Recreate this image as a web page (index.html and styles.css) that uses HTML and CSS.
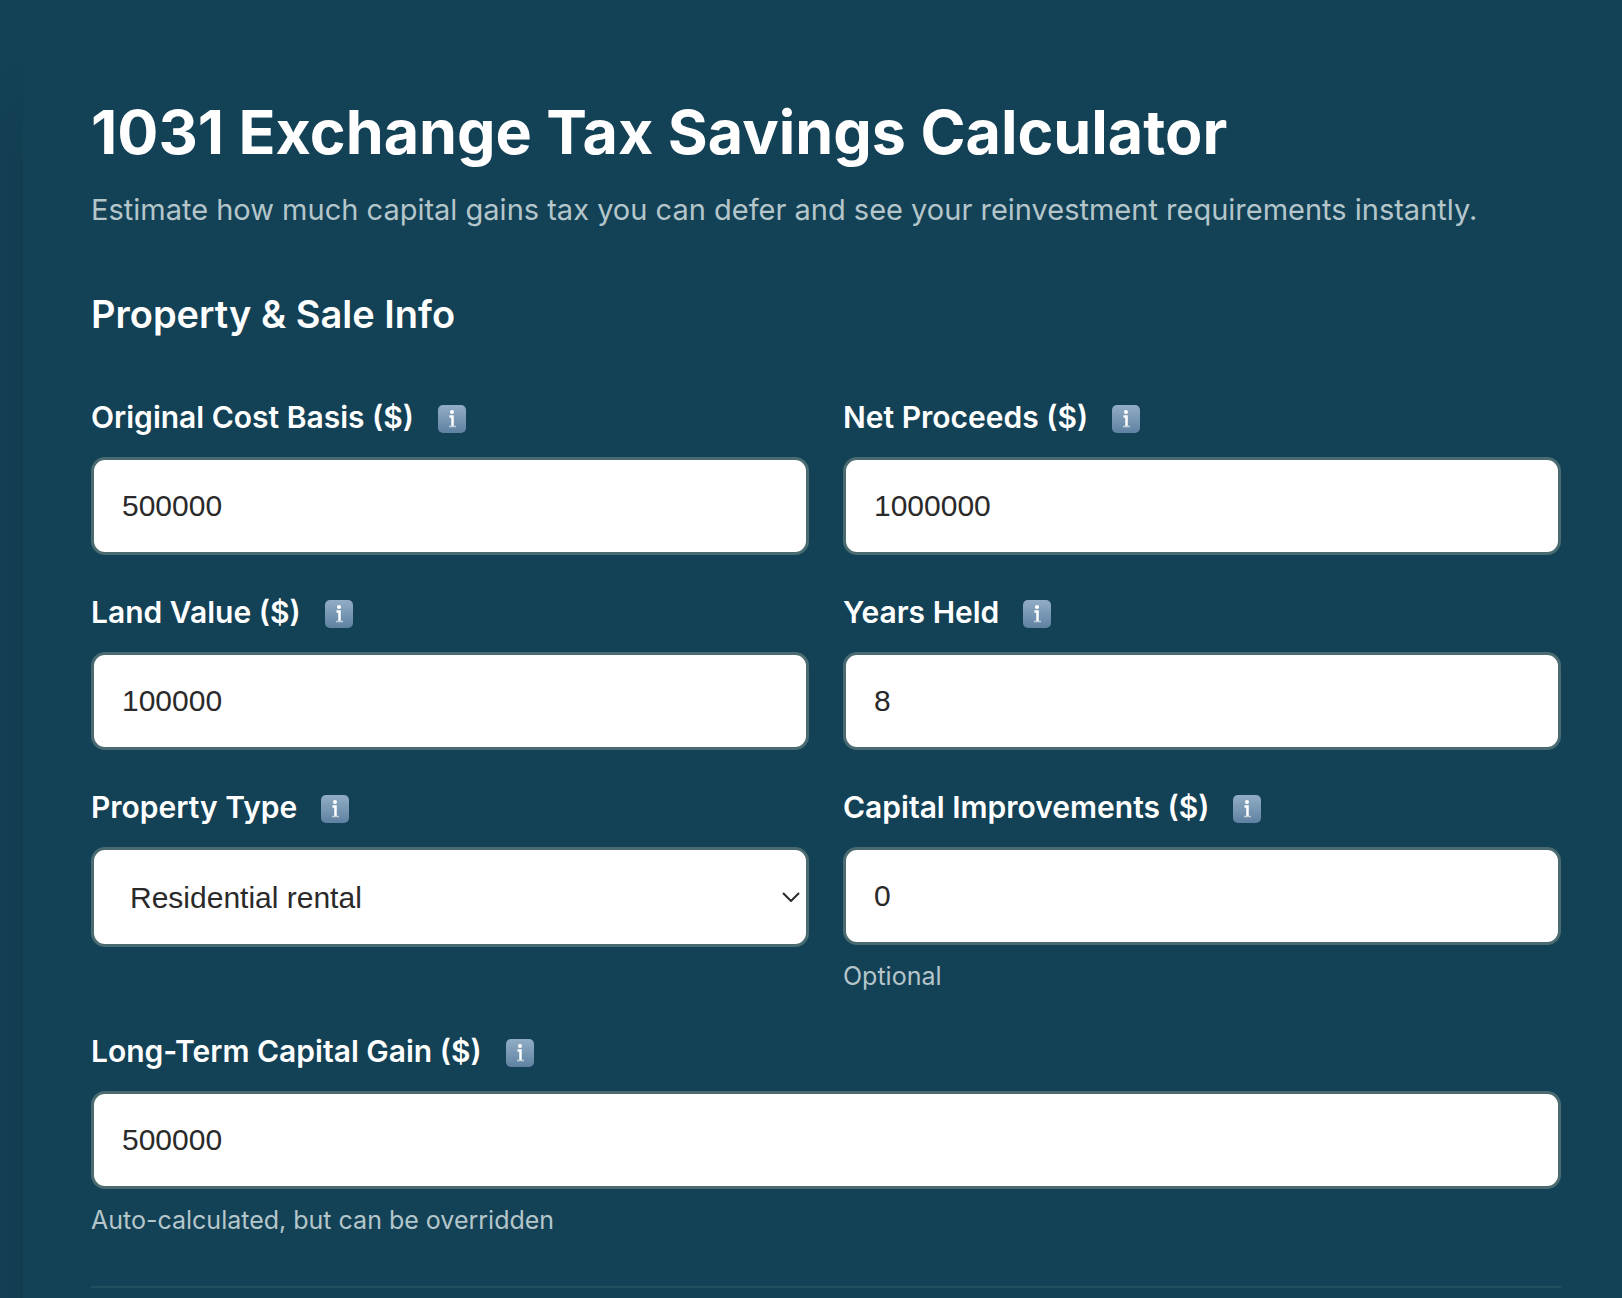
FILE: index.html
```html
<!DOCTYPE html>
<html lang="en">
<head>
    <meta charset="UTF-8">
    <meta name="viewport" content="width=device-width, initial-scale=1.0">
    <title>1031 Exchange Tax Savings Calculator</title>
    <link rel="stylesheet" href="styles.css">
</head>
<body>
    <!-- shared info badge -->
    <svg class="sprite" aria-hidden="true">
        <defs>
            <linearGradient id="infoFill" x1="0" y1="0" x2="0" y2="1">
                <stop offset="0" stop-color="#92adc5"/>
                <stop offset="1" stop-color="#5f82a2"/>
            </linearGradient>
        </defs>
        <symbol id="info" viewBox="0 0 28 28">
            <rect width="28" height="28" rx="5" fill="url(#infoFill)"/>
            <circle cx="14" cy="7" r="2" fill="#fff"/>
            <path d="M11.5 11.5H14.5V21" fill="none" stroke="#fff" stroke-width="2.5"/>
            <path d="M11 21.5h7" fill="none" stroke="#c3d0db" stroke-width="1.5"/>
        </symbol>
    </svg>

    <main class="calculator">
        <h1>1031 Exchange Tax Savings Calculator</h1>
        <p class="subtitle">Estimate how much capital gains tax you can defer and see your reinvestment requirements instantly.</p>

        <form id="calcForm">
            <h2>Property &amp; Sale Info</h2>

            <div class="form-grid">
                <div class="form-group">
                    <label for="costBasis">Original Cost Basis ($) <svg class="info"><use href="#info"/></svg></label>
                    <input type="text" inputmode="numeric" id="costBasis" name="costBasis" value="500000">
                </div>

                <div class="form-group">
                    <label for="netProceeds">Net Proceeds ($) <svg class="info"><use href="#info"/></svg></label>
                    <input type="text" inputmode="numeric" id="netProceeds" name="netProceeds" value="1000000">
                </div>

                <div class="form-group">
                    <label for="landValue">Land Value ($) <svg class="info"><use href="#info"/></svg></label>
                    <input type="text" inputmode="numeric" id="landValue" name="landValue" value="100000">
                </div>

                <div class="form-group">
                    <label for="yearsHeld">Years Held <svg class="info"><use href="#info"/></svg></label>
                    <input type="text" inputmode="numeric" id="yearsHeld" name="yearsHeld" value="8">
                </div>

                <div class="form-group">
                    <label for="propertyType">Property Type <svg class="info"><use href="#info"/></svg></label>
                    <div class="select-wrap">
                        <select id="propertyType" name="propertyType">
                            <option selected>Residential rental</option>
                            <option>Commercial</option>
                            <option>Land</option>
                        </select>
                        <svg class="chevron" viewBox="0 0 18 10"><path d="M1 1l8 8 8-8"/></svg>
                    </div>
                </div>

                <div class="form-group">
                    <label for="improvements">Capital Improvements ($) <svg class="info"><use href="#info"/></svg></label>
                    <input type="text" inputmode="numeric" id="improvements" name="improvements" value="0">
                    <small>Optional</small>
                </div>

                <div class="form-group full">
                    <label for="capitalGain">Long-Term Capital Gain ($) <svg class="info"><use href="#info"/></svg></label>
                    <input type="text" inputmode="numeric" id="capitalGain" name="capitalGain" value="500000">
                    <small>Auto-calculated, but can be overridden</small>
                </div>
            </div>

            <hr>
        </form>
    </main>
</body>
</html>
```
FILE: styles.css
```css
* { box-sizing: border-box; }
body { margin: 0; background: #134156; color: #fff; font-family: Inter, "Liberation Sans", sans-serif; overflow-x: hidden; }
.sprite { position: absolute; width: 0; height: 0; }

.calculator { min-height: 100vh; margin-left: 23px; padding: 92px 61px 8px 68px; background: #134156; box-shadow: 0 110px 60px rgba(0, 0, 0, 0.1); }
h1 { margin: 0; font-size: 61px; line-height: 80px; font-weight: 700; }
.subtitle { margin: 16px 0 0; font-size: 29px; line-height: 44px; color: #b5c6cb; }
h2 { margin: 56px 0 55px; font-size: 38px; line-height: 52px; font-weight: 600; }

.form-grid { display: grid; grid-template-columns: 1fr 1fr; gap: 35px 34px; }
.full { grid-column: 1 / -1; }
label { display: flex; align-items: center; gap: 24px; margin-bottom: 18px; font-size: 30px; line-height: 44px; font-weight: 600; }
.info { width: 28px; height: 28px; flex: none; margin-top: 3px; }
input, select { display: block; width: 100%; height: 98px; padding: 0 28px; border: 3px solid #4a6b71; border-radius: 14px; background: #fff; color: #2a2a2a; font-family: "Liberation Sans", Arial, sans-serif; font-size: 30px; }
select { height: 100px; appearance: none; padding: 0 36px; }
.select-wrap { position: relative; }
.chevron { position: absolute; right: 9px; top: 45px; width: 18px; height: 10px; fill: none; stroke: #2a2a2a; stroke-width: 2; pointer-events: none; }
small { display: block; margin-top: 13px; font-size: 25px; line-height: 36px; color: #b5c6cb; }
hr { margin: 48px 0 0; border: 0; border-top: 2px solid #22505f; }
```
